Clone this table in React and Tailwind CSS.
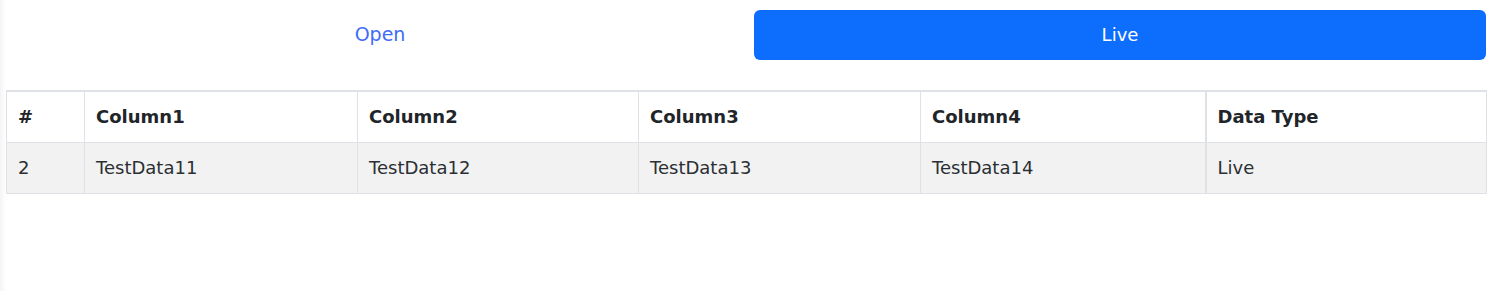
const columns = ["#", "Column1", "Column2", "Column3", "Column4", "Data Type"];
const rows = [["2", "TestData11", "TestData12", "TestData13", "TestData14", "Live"]];

export default function App() {
  return (
    <div
      className="flex min-h-[291px] w-[1500px] bg-white text-[#212529]"
      style={{ fontFamily: '"DejaVu Sans", sans-serif' }}
    >
      {/* faint left edge */}
      <div className="w-[6px] shrink-0 bg-gradient-to-r from-[#f4f4f4] to-white" />

      <div className="flex w-[1480px] flex-col">
        {/* Tabs */}
        <div className="mt-[10px] flex">
          <button className="flex h-[50px] w-[748px] items-center justify-center pb-[1px] text-[19px] text-[#3d6cf8]">
            Open
          </button>
          <button className="flex h-[50px] w-[732px] items-center justify-center rounded-[6px] bg-[#0d6efd] pb-[1px] text-[18px] text-white">
            Live
          </button>
        </div>

        {/* Table */}
        <table className="mt-[30px] w-[1480px] table-fixed border-collapse text-[18px]">
          <colgroup>
            <col className="w-[78px]" />
            <col className="w-[273px]" />
            <col className="w-[281px]" />
            <col className="w-[282px]" />
            <col className="w-[285px]" />
            <col className="w-[281px]" />
          </colgroup>
          <thead>
            <tr className="border-t-2 border-[#dee2e6]">
              {columns.map((c, i) => (
                <th
                  key={c}
                  className={`h-[51px] border border-[#dee2e6] px-[11px] text-left font-bold leading-[27px] ${
                    i === 5 ? "border-l-2" : ""
                  }`}
                >
                  {c}
                </th>
              ))}
            </tr>
          </thead>
          <tbody>
            {rows.map((r) => (
              <tr key={r[0]} className="bg-[#f2f2f2] text-[#2b2f33]">
                {r.map((v, i) => (
                  <td
                    key={i}
                    className={`h-[51px] border border-[#dee2e6] px-[11px] leading-[27px] ${
                      i === 5 ? "border-l-2" : ""
                    }`}
                  >
                    {v}
                  </td>
                ))}
              </tr>
            ))}
          </tbody>
        </table>
      </div>
    </div>
  );
}
